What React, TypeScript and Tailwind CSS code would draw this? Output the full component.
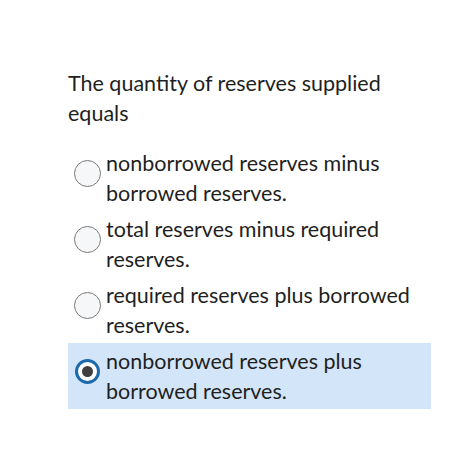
import { useState } from "react";

const options = [
  "nonborrowed reserves minus borrowed reserves.",
  "total reserves minus required reserves.",
  "required reserves plus borrowed reserves.",
  "nonborrowed reserves plus borrowed reserves.",
];

export default function App() {
  const [selected, setSelected] = useState(3);

  return (
    <div className="w-[474px] h-[474px] bg-white text-[#1f1f1f] font-['Lato',sans-serif] pt-[68px] pl-[68px] pr-[43px]">
      <div className="text-[21.5px] leading-[30px] pr-[20px]">The quantity of reserves supplied equals</div>
      <div className="mt-[17px] flex flex-col">
        {options.map((option, index) => {
          const isSelected = selected === index;
          return (
            <button
              key={option}
              type="button"
              onClick={() => setSelected(index)}
              className={`flex items-start text-left pt-[3px] pb-[3px] ${isSelected ? "bg-[#d3e5f8]" : "bg-white"}`}
            >
              <span className="w-[38px] shrink-0 flex justify-center pt-[12px] pl-[1px]">
                {isSelected ? (
                  <span className="mt-[1px] w-[25px] h-[25px] rounded-full border-[3px] border-[#1c69ac] bg-white flex items-center justify-center">
                    <span className="w-[11px] h-[11px] rounded-full bg-[#3f3f3f]" />
                  </span>
                ) : (
                  <span className="w-[27px] h-[27px] rounded-full border border-[#7a7a7a] bg-[#f6f7f9]" />
                )}
              </span>
              <span className="text-[21.5px] leading-[30px]">{option}</span>
            </button>
          );
        })}
      </div>
    </div>
  );
}
